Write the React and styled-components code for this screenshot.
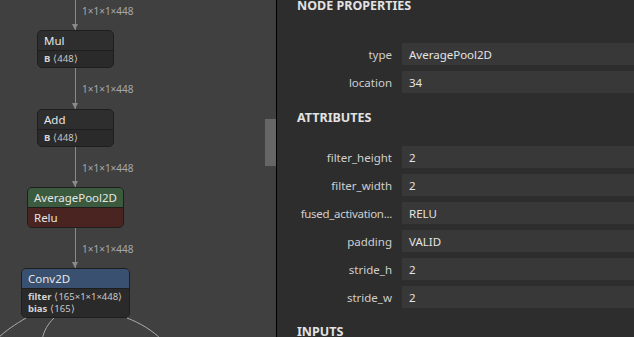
import React from 'react';
import styled, { createGlobalStyle } from 'styled-components';

const GlobalStyle = createGlobalStyle`
  html, body {
    margin: 0;
    padding: 0;
    background: #2d2d2d;
    overflow: hidden;
  }
  body {
    font-family: "Noto Sans", "Open Sans", sans-serif;
  }
`;

const Page = styled.div`
  display: flex;
  width: 634px;
  height: 337px;
  overflow: hidden;
`;

const GraphPanel = styled.div`
  position: relative;
  width: 276px;
  flex-shrink: 0;
  background: #404040;
  border-right: 1px solid #000;
  overflow: hidden;
`;

const GraphColumn = styled.div`
  width: 151px;
  display: flex;
  flex-direction: column;
  align-items: center;
  margin-top: -10px;
`;

const EdgeWrap = styled.div`
  position: relative;
  width: 1px;
  height: ${({ h }) => h}px;
  background: #8a8a8a;
`;

const Arrow = styled.div`
  position: absolute;
  bottom: 0;
  left: -3px;
  width: 0;
  height: 0;
  border-left: 3.5px solid transparent;
  border-right: 3.5px solid transparent;
  border-top: 6px solid #8a8a8a;
`;

const EdgeLabel = styled.span`
  position: absolute;
  left: 7px;
  top: 14px;
  font-size: 10px;
  line-height: 14px;
  color: #a8a8a8;
  white-space: nowrap;
`;

const Node = styled.div`
  min-width: ${({ w }) => w}px;
  border: 1px solid #1e1e1e;
  border-radius: 5px;
  overflow: hidden;
  background: #2a2a2a;
  color: #e6e6e6;
`;

const NodeHeader = styled.div`
  height: 19px;
  display: flex;
  align-items: center;
  padding: 0 6px;
  font-size: 11.5px;
  background: ${({ bg }) => bg || '#2e2e2e'};
  border-top: ${({ sep }) => (sep ? '1px solid #1e1e1e' : 'none')};
`;

const NodeBody = styled.div`
  border-top: 1px solid #1e1e1e;
  padding: 2px 6px;
  font-size: 9.5px;
  line-height: 12px;
  color: #c8c8c8;
  background: #2a2a2a;
`;

const AttrName = styled.b`
  color: #d4d4d4;
  font-weight: 700;
  margin-right: 3px;
`;

const Curves = styled.svg`
  display: block;
  overflow: visible;
`;

const Scrollbar = styled.div`
  position: absolute;
  right: 0;
  top: 119px;
  width: 11px;
  height: 47px;
  background: #666;
`;

const Sidebar = styled.div`
  flex: 1;
  background: #2d2d2d;
  padding: 0 0 0 20px;
  overflow: hidden;
`;

const Section = styled.div`
  margin-top: ${({ top }) => top}px;
`;

const Heading = styled.div`
  font-size: 12.5px;
  line-height: 16px;
  font-weight: 700;
  color: #e2e2e2;
  margin-bottom: ${({ gap }) => gap}px;
`;

const Rows = styled.div`
  display: flex;
  flex-direction: column;
  gap: 6px;
`;

const Row = styled.div`
  display: flex;
  align-items: center;
  gap: 10px;
`;

const Label = styled.div`
  width: 95px;
  flex-shrink: 0;
  display: flex;
  justify-content: flex-end;
  font-size: 11.5px;
  color: #cfcfcf;
  white-space: nowrap;
  letter-spacing: ${({ tight }) => (tight ? '-0.3px' : '0')};
`;

const Value = styled.div`
  width: 300px;
  flex-shrink: 0;
  height: 22px;
  display: flex;
  align-items: center;
  padding-left: 7px;
  background: #383838;
  font-size: 11.5px;
  color: #e4e4e4;
`;

const Edge = ({ h = 40, label }) => (
  <EdgeWrap h={h}>
    <EdgeLabel>{label}</EdgeLabel>
    <Arrow />
  </EdgeWrap>
);

const props = [
  ['type', 'AveragePool2D'],
  ['location', '34'],
];

const attrs = [
  ['filter_height', '2'],
  ['filter_width', '2'],
  ['fused_activation...', 'RELU'],
  ['padding', 'VALID'],
  ['stride_h', '2'],
  ['stride_w', '2'],
];

export default function App() {
  return (
    <Page>
      <GlobalStyle />
      <GraphPanel>
        <GraphColumn>
          <Edge label="1×1×1×448" />
          <Node w={75}>
            <NodeHeader>Mul</NodeHeader>
            <NodeBody>
              <AttrName>B</AttrName>⟨448⟩
            </NodeBody>
          </Node>
          <Edge h={41} label="1×1×1×448" />
          <Node w={75}>
            <NodeHeader>Add</NodeHeader>
            <NodeBody>
              <AttrName>B</AttrName>⟨448⟩
            </NodeBody>
          </Node>
          <Edge label="1×1×1×448" />
          <Node w={91}>
            <NodeHeader bg="#3b5a3e">AveragePool2D</NodeHeader>
            <NodeHeader bg="#4a2421" sep>Relu</NodeHeader>
          </Node>
          <Edge label="1×1×1×448" />
          <Node w={107}>
            <NodeHeader bg="#3a5070">Conv2D</NodeHeader>
            <NodeBody>
              <div><AttrName>filter</AttrName>⟨165×1×1×448⟩</div>
              <div><AttrName>bias</AttrName>⟨165⟩</div>
            </NodeBody>
          </Node>
          <Curves width="151" height="20" viewBox="0 0 151 20">
            <path d="M26 0 C 16 6, 6 12, -4 22" fill="none" stroke="#aaa" strokeWidth="1" />
            <path d="M54 0 C 48 6, 44 12, 42 22" fill="none" stroke="#aaa" strokeWidth="1" />
            <path d="M127 0 C 140 5, 152 12, 162 22" fill="none" stroke="#aaa" strokeWidth="1" />
          </Curves>
        </GraphColumn>
        <Scrollbar />
      </GraphPanel>
      <Sidebar>
        <Section top={-2}>
          <Heading gap={29}>NODE PROPERTIES</Heading>
          <Rows>
            {props.map(([k, v]) => (
              <Row key={k}>
                <Label>{k}</Label>
                <Value>{v}</Value>
              </Row>
            ))}
          </Rows>
        </Section>
        <Section top={17}>
          <Heading gap={20}>ATTRIBUTES</Heading>
          <Rows>
            {attrs.map(([k, v]) => (
              <Row key={k}>
                <Label tight={k.length > 15}>{k}</Label>
                <Value>{v}</Value>
              </Row>
            ))}
          </Rows>
        </Section>
        <Section top={16}>
          <Heading gap={10}>INPUTS</Heading>
        </Section>
      </Sidebar>
    </Page>
  );
}
